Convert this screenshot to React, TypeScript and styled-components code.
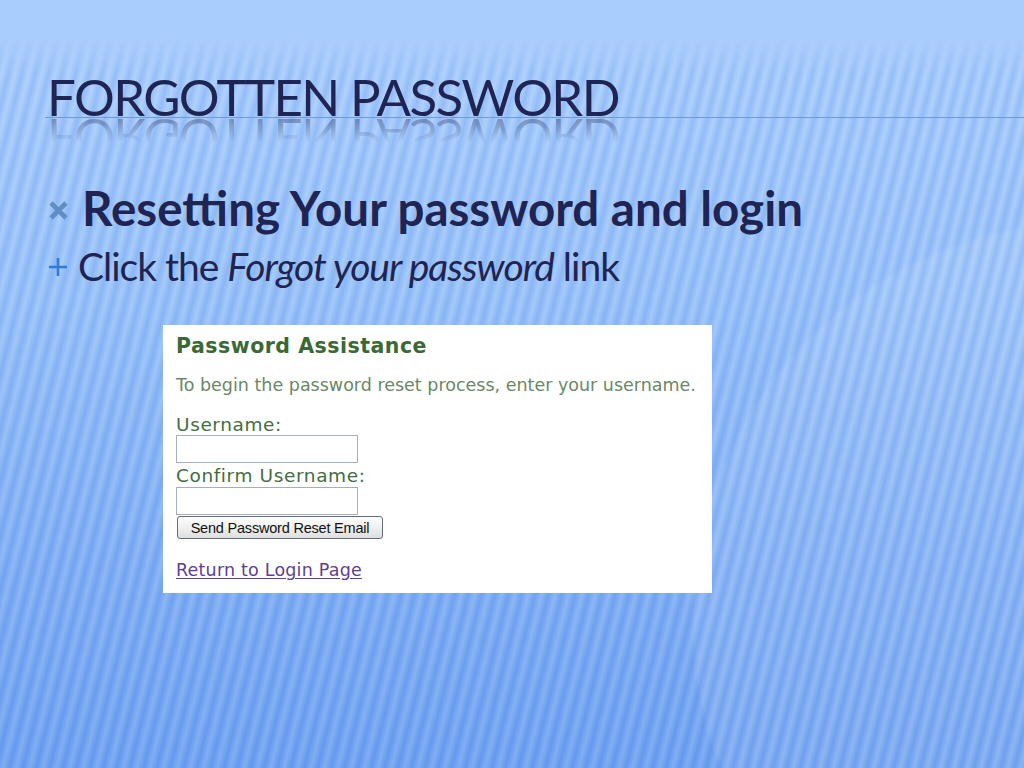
import React from "react";
import styled, { createGlobalStyle } from "styled-components";

const Global = createGlobalStyle`
  html, body { margin: 0; padding: 0; }
  body {
    width: 1024px;
    height: 768px;
    overflow: hidden;
    font-family: Lato, "Open Sans", sans-serif;
  }
`;

const Slide = styled.main`
  width: 1024px;
  height: 768px;
  box-sizing: border-box;
  overflow: hidden;
  display: flex;
  flex-direction: column;
  background:
    linear-gradient(to bottom, #a9cdfd 0px, #a9cdfd 36px, rgba(169, 205, 253, 0) 74px),
    repeating-linear-gradient(
      104deg,
      rgba(40, 100, 210, 0.12) 0px,
      rgba(255, 255, 255, 0.15) 6.5px,
      rgba(40, 100, 210, 0.12) 13px
    ),
    radial-gradient(circle at 1090px 620px, rgba(255, 255, 255, 0.09) 0 395px, rgba(255, 255, 255, 0) 400px),
    linear-gradient(to bottom, #a9cdfd 0%, #96c1f9 38%, #7dadf4 72%, #6a9ff0 100%);
`;

const Header = styled.header`
  display: flex;
  margin: 76px 0 0 45px;
  padding-left: 2px;
  border-bottom: 1px solid #6f9ad6;
`;

const Title = styled.h1`
  margin: 0;
  font-family: Lato, "Open Sans", sans-serif;
  font-weight: 400;
  font-size: 51px;
  line-height: 41px;
  letter-spacing: -1.6px;
  color: #1f2452;
  white-space: nowrap;
  -webkit-box-reflect: below 1px linear-gradient(to bottom, transparent 40%, rgba(0, 0, 0, 0.38));
`;

const Bullets = styled.ul`
  list-style: none;
  margin: 0;
  padding: 0;
  display: flex;
  flex-direction: column;
`;

const Item = styled.li<{ $level: 1 | 2 }>`
  display: flex;
  align-items: center;
  color: #1f2452;
  white-space: nowrap;
  font-family: Lato, "Open Sans", sans-serif;
  font-weight: ${(p) => (p.$level === 1 ? 700 : 400)};
  font-size: ${(p) => (p.$level === 1 ? "47.5px" : "39px")};
  letter-spacing: ${(p) => (p.$level === 1 ? "0" : "-1px")};
  line-height: ${(p) => (p.$level === 1 ? "56px" : "50px")};
  margin-top: ${(p) => (p.$level === 1 ? "62px" : "5px")};
  padding-left: ${(p) => (p.$level === 1 ? "49px" : "48px")};
  gap: ${(p) => (p.$level === 1 ? "14px" : "10px")};

  em {
    font-style: italic;
  }
`;

const Marker = styled.svg<{ $drop: number }>`
  flex: none;
  display: block;
  margin-top: ${(p) => p.$drop}px;
`;

const Shot = styled.section`
  margin: 34px 0 0 163px;
  width: 549px;
  height: 268px;
  box-sizing: border-box;
  padding: 9px 0 0 13px;
  background: #ffffff;
  font-family: "DejaVu Sans", Verdana, sans-serif;
  display: flex;
  flex-direction: column;
  align-items: flex-start;
`;

const ShotTitle = styled.h2`
  margin: 0;
  font-size: 20.5px;
  line-height: 24px;
  font-weight: 700;
  color: #3a6936;
  letter-spacing: 0.5px;
`;

const Desc = styled.p`
  margin: 17px 0 0;
  font-size: 17.5px;
  line-height: 20px;
  color: #6a8866;
  white-space: nowrap;
`;

const Label = styled.label<{ $gap: number }>`
  display: block;
  margin-top: ${(p) => p.$gap}px;
  font-size: 18.5px;
  line-height: 20px;
  letter-spacing: 0.6px;
  color: #436d3f;
`;

const Field = styled.input`
  display: block;
  box-sizing: border-box;
  width: 182px;
  height: 28px;
  margin: 0;
  border: 1px solid #a6aebd;
  background: #fff;
  outline: none;
`;

const SecondField = styled(Field)`
  margin-top: 1px;
`;

const SendButton = styled.button`
  margin: 1px 0 0 1px;
  width: 206px;
  height: 23px;
  box-sizing: border-box;
  padding: 0;
  border: 1px solid #5f6d80;
  border-radius: 3px;
  background: linear-gradient(to bottom, #fdfdfd 0%, #f0f0f0 50%, #dedede 100%);
  font-family: "Liberation Sans", Arial, sans-serif;
  font-size: 14.5px;
  color: #111;
  letter-spacing: -0.2px;
`;

const BackLink = styled.a`
  margin-top: 21px;
  font-size: 17.5px;
  line-height: 20px;
  letter-spacing: 0.2px;
  color: #5e3f91;
  text-decoration: underline;
  text-underline-offset: 2px;
`;

const CrossBullet = () => (
  <Marker $drop={4} width="19" height="19" viewBox="0 0 19 19">
    <path d="M2 2 L17 17 M17 2 L2 17" stroke="#5f8fc2" strokeWidth="4.6" strokeLinecap="butt" />
  </Marker>
);

const PlusBullet = () => (
  <Marker $drop={1} width="20" height="20" viewBox="0 0 20 20">
    <path d="M1 10 H19 M10 1 V19" stroke="#2f7bd3" strokeWidth="2.6" />
  </Marker>
);

export default function App() {
  return (
    <>
      <Global />
      <Slide>
        <Header>
          <Title>FORGOTTEN PASSWORD</Title>
        </Header>
        <Bullets>
          <Item $level={1}>
            <CrossBullet />
            <span>Resetting Your password and login</span>
          </Item>
          <Item $level={2}>
            <PlusBullet />
            <span>
              Click the <em>Forgot your password</em> link
            </span>
          </Item>
        </Bullets>
        <Shot>
          <ShotTitle>Password Assistance</ShotTitle>
          <Desc>To begin the password reset process, enter your username.</Desc>
          <Label $gap={20}>Username:</Label>
          <Field type="text" />
          <Label $gap={3}>Confirm Username:</Label>
          <SecondField type="text" />
          <SendButton type="button">Send Password Reset Email</SendButton>
          <BackLink href="#">Return to Login Page</BackLink>
        </Shot>
      </Slide>
    </>
  );
}
